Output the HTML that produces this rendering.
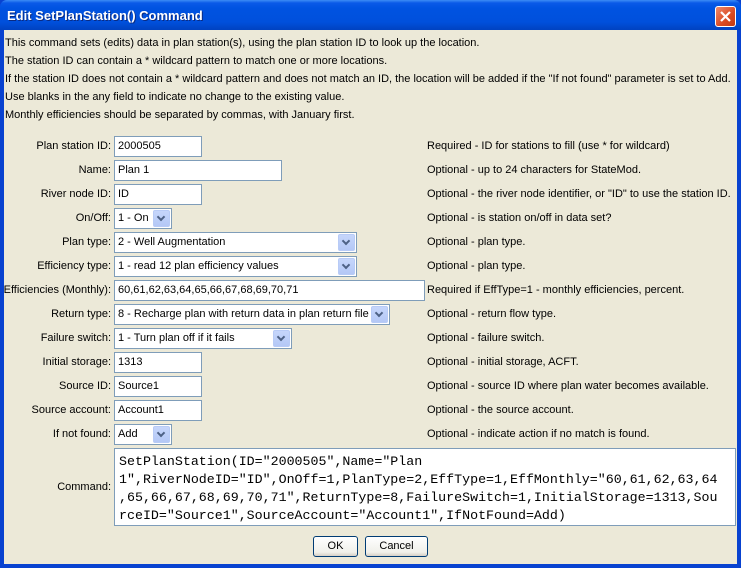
<!DOCTYPE html>
<html><head><style>
*{margin:0;padding:0;box-sizing:border-box}
body{width:741px;height:568px;overflow:hidden;background:#0842d0;font-family:"Liberation Sans",sans-serif;font-size:11px;color:#000;position:relative}
#title{position:absolute;left:0;top:0;width:741px;height:30px;background:linear-gradient(#3d8cf5 0,#0a5ae8 3px,#0053e1 8px,#0050dc 22px,#0042c0 30px);border-radius:7px 7px 0 0}
#title span{position:absolute;left:7px;top:8px;color:#fff;font-weight:bold;font-size:13px;text-shadow:1px 1px #0a2a80}
#close{position:absolute;left:715px;top:6px;width:21px;height:21px;border:1px solid #fff;border-radius:3px;background:linear-gradient(135deg,#f08a6c,#d94a22 60%,#c23a12)}
#client{position:absolute;left:4px;top:30px;width:733px;height:534px;background:#ece9d8}
#form{position:absolute;left:0;top:0;width:741px;height:568px}
.t{position:absolute;white-space:nowrap;line-height:13px}
.l{position:absolute;right:630px;text-align:right;white-space:nowrap;line-height:13px}
.f{position:absolute;height:21px;background:#fff;border:1px solid #7f9db9;padding:3px 3px;white-space:nowrap;overflow:hidden;line-height:13px}
.c .a{position:absolute;right:1px;top:1px;width:17px;height:17px;background:linear-gradient(#c6d6fb,#b4c8f6);border:1px solid #b8cbf6;border-radius:2px}
.c .a:after{content:"";position:absolute;left:4px;top:3px;width:4px;height:4px;border-right:2px solid #4d6185;border-bottom:2px solid #4d6185;transform:rotate(45deg)}
.btn{position:absolute;height:21px;border:1px solid #003c74;border-radius:3px;background:linear-gradient(#fff,#f0f0ea 80%,#d6d0c5);text-align:center;line-height:19px}
</style></head><body>
<div id="title"><span>Edit SetPlanStation() Command</span>
<div id="close"><svg width="19" height="19"><path d="M5 5L14 14M14 5L5 14" stroke="#fff" stroke-width="2.2"/></svg></div></div>
<div id="client">
<div class="t" style="left:1px;top:7px">This command sets (edits) data in plan station(s), using the plan station ID to look up the location.</div>
<div class="t" style="left:1px;top:25px">The station ID can contain a * wildcard pattern to match one or more locations.</div>
<div class="t" style="left:1px;top:43px">If the station ID does not contain a * wildcard pattern and does not match an ID, the location will be added if the "If not found" parameter is set to Add.</div>
<div class="t" style="left:1px;top:61px">Use blanks in the any field to indicate no change to the existing value.</div>
<div class="t" style="left:1px;top:79px">Monthly efficiencies should be separated by commas, with January first.</div>
</div>
<div id="form">
<div class="l" style="top:140px">Plan station ID:</div><div class="f" style="left:114px;top:136px;width:88px">2000505</div><div class="t" style="left:427px;top:140px">Required - ID for stations to fill (use * for wildcard)</div>
<div class="l" style="top:164px">Name:</div><div class="f" style="left:114px;top:160px;width:168px">Plan 1</div><div class="t" style="left:427px;top:164px">Optional - up to 24 characters for StateMod.</div>
<div class="l" style="top:188px">River node ID:</div><div class="f" style="left:114px;top:184px;width:88px">ID</div><div class="t" style="left:427px;top:188px">Optional - the river node identifier, or "ID" to use the station ID.</div>
<div class="l" style="top:212px">On/Off:</div><div class="f c" style="left:114px;top:208px;width:58px">1 - On<div class="a"></div></div><div class="t" style="left:427px;top:212px">Optional - is station on/off in data set?</div>
<div class="l" style="top:236px">Plan type:</div><div class="f c" style="left:114px;top:232px;width:243px">2 - Well Augmentation<div class="a"></div></div><div class="t" style="left:427px;top:236px">Optional - plan type.</div>
<div class="l" style="top:260px">Efficiency type:</div><div class="f c" style="left:114px;top:256px;width:243px">1 - read 12 plan efficiency values<div class="a"></div></div><div class="t" style="left:427px;top:260px">Optional - plan type.</div>
<div class="l" style="top:284px">Efficiencies (Monthly):</div><div class="f" style="left:114px;top:280px;width:311px">60,61,62,63,64,65,66,67,68,69,70,71</div><div class="t" style="left:427px;top:284px">Required if EffType=1 - monthly efficiencies, percent.</div>
<div class="l" style="top:308px">Return type:</div><div class="f c" style="left:114px;top:304px;width:276px">8 - Recharge plan with return data in plan return file<div class="a"></div></div><div class="t" style="left:427px;top:308px">Optional - return flow type.</div>
<div class="l" style="top:332px">Failure switch:</div><div class="f c" style="left:114px;top:328px;width:178px">1 - Turn plan off if it fails<div class="a"></div></div><div class="t" style="left:427px;top:332px">Optional - failure switch.</div>
<div class="l" style="top:356px">Initial storage:</div><div class="f" style="left:114px;top:352px;width:88px">1313</div><div class="t" style="left:427px;top:356px">Optional - initial storage, ACFT.</div>
<div class="l" style="top:380px">Source ID:</div><div class="f" style="left:114px;top:376px;width:88px">Source1</div><div class="t" style="left:427px;top:380px">Optional - source ID where plan water becomes available.</div>
<div class="l" style="top:404px">Source account:</div><div class="f" style="left:114px;top:400px;width:88px">Account1</div><div class="t" style="left:427px;top:404px">Optional - the source account.</div>
<div class="l" style="top:428px">If not found:</div><div class="f c" style="left:114px;top:424px;width:58px">Add<div class="a"></div></div><div class="t" style="left:427px;top:428px">Optional - indicate action if no match is found.</div>
<div class="l" style="top:481px">Command:</div>
<div class="f" style="left:114px;top:448px;width:622px;height:78px;padding:4px 4px;font-family:'Liberation Mono',monospace;font-size:13.3px;line-height:18px;white-space:pre">SetPlanStation(ID="2000505",Name="Plan
1",RiverNodeID="ID",OnOff=1,PlanType=2,EffType=1,EffMonthly="60,61,62,63,64
,65,66,67,68,69,70,71",ReturnType=8,FailureSwitch=1,InitialStorage=1313,Sou
rceID="Source1",SourceAccount="Account1",IfNotFound=Add)</div>
<div class="btn" style="left:313px;top:536px;width:45px">OK</div>
<div class="btn" style="left:365px;top:536px;width:63px">Cancel</div>
</div>
</body></html>
